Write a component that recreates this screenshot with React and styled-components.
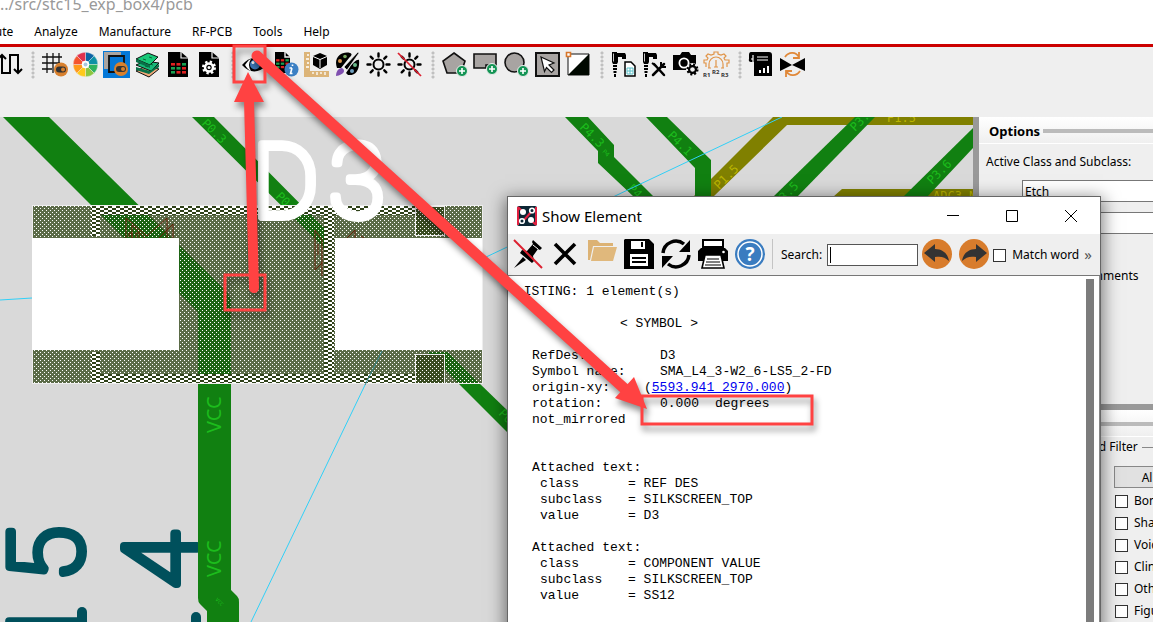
import React from "react";
import styled, { createGlobalStyle, css } from "styled-components";

const GlobalStyle = createGlobalStyle`
  *, *::before, *::after { box-sizing: border-box; }
  body {
    margin: 0;
    overflow: hidden;
    background: #efefef;
    color: #000;
    font-family: "Noto Sans", "Liberation Sans", sans-serif;
    font-size: 12px;
    line-height: 16px;
  }
  button, input, select { font: inherit; color: inherit; }
`;

const RED = "#ff4242";
const GREEN = "#118011";
const LABEL = "#1cbc1c";
const OLIVE = "#808000";
const GOLD = "#bab400";
const SILK = "#00505c";

/* ---------- application frame ---------- */

const Frame = styled.div`
  position: relative;
  display: flex;
  flex-direction: column;
  height: 100vh;
  overflow: hidden;
`;

const TitleBar = styled.header`
  height: 18px;
  overflow: hidden;
  background: #fff;
  color: #999;
  font-size: 16px;
  line-height: 9px;
  white-space: nowrap;
`;

const MenuBar = styled.nav`
  display: flex;
  align-items: center;
  gap: 21px;
  height: 29px;
  padding-top: 2px;
  background: #fff;
  border-bottom: 3px solid #cc0000;
`;

const MenuItem = styled.button`
  padding: 0;
  border: 0;
  background: none;
  &:first-child { margin-left: -20px; }
`;

const Toolbar = styled.div`
  display: flex;
  align-items: flex-start;
  flex: 0 0 70px;
  padding-top: 2px;
  background: #efefef;
`;

const ToolGroup = styled.div`
  display: flex;
  &:first-child { margin-left: -6px; }
`;

const Grip = styled.span`
  flex: 0 0 14px;
  height: 28px;
  margin-top: 2px;
  background: radial-gradient(circle at 2px 2px, #c0c0c0 1px, transparent 2px) 6px 0 / 4px 4px repeat-y;
`;

const ToolButton = styled.button`
  display: flex;
  align-items: center;
  justify-content: center;
  width: 31px;
  height: 31px;
  padding: 0;
  border: 0;
  background: none;
  svg { width: 27px; height: 27px; }
`;

const Workspace = styled.main`
  display: flex;
  flex: 1;
  min-height: 0;
`;

const Board = styled.section`
  flex: 1;
  min-width: 0;
  background: #d9d9d9;
  svg { display: block; width: 100%; height: 100%; }
`;

/* ---------- side panel ---------- */

const SidePanel = styled.aside`
  display: flex;
  flex-direction: column;
  flex: 0 0 180px;
  overflow: hidden;
  border-left: 6px solid #999;
  white-space: nowrap;
`;

const Pane = styled.section`
  display: flex;
  flex-direction: column;
  ${(p) => p.$divided && css`border-top: 6px solid #999;`}
  ${(p) => p.$height && css`height: ${p.$height}px;`}
`;

const PaneTitle = styled.h2`
  display: flex;
  align-items: center;
  gap: 3px;
  height: 27px;
  margin: 0;
  padding: 2px 0 0 10px;
  border-bottom: 1px solid #fff;
  background: linear-gradient(#fff, #efefef);
  font-size: 13px;
  line-height: 18px;
  &::after {
    content: "";
    flex: 1;
    height: 4px;
    background: #bbb;
  }
`;

const OptionsBody = styled.div`
  display: flex;
  flex-direction: column;
  padding: 10px 0 0 7px;
`;

const Combo = styled.select`
  appearance: none;
  width: 150px;
  height: 22px;
  margin: 10px 0 0 36px;
  padding: 2px 2px 0;
  border: 1px solid #777;
  border-radius: 0;
  background: #fff;
`;

const PaneNote = styled.p`
  margin: 34px 0 0 91px;
`;

const FilterSet = styled.fieldset`
  min-width: 300px;
  margin: 2px 0 0 75px;
  padding: 0 0 0 60px;
  border: 0;
  border-top: 1px solid #888;
  legend { margin-left: -36px; padding: 0 4px; }
`;

const FilterButton = styled.button`
  display: block;
  width: 90px;
  height: 22px;
  margin: 11px 0 2px;
  padding: 2px 0 0;
  border: 1px solid #888;
  background: #e1e1e1;
`;

const Check = styled.label`
  display: flex;
  align-items: center;
  gap: 6px;
  height: 22px;
  padding-left: 1px;
  white-space: nowrap;
  input {
    appearance: none;
    width: 13px;
    height: 13px;
    margin: 0;
    border: 1px solid #333;
    background: #fff;
  }
`;

/* ---------- dialog ---------- */

const Dialog = styled.section`
  position: absolute;
  top: 196px;
  left: 507px;
  bottom: -40px;
  display: flex;
  flex-direction: column;
  width: 594px;
  border: 1px solid #666;
  background: #efefef;
  box-shadow: 0 4px 16px 2px rgba(0, 0, 0, 0.5);
`;

const DialogTitle = styled.header`
  display: flex;
  align-items: center;
  gap: 5px;
  height: 37px;
  padding-left: 9px;
  background: #fff;
  h1 { flex: 1; margin: 0; font-size: 15px; font-weight: 400; }
`;

const WindowButtons = styled.div`
  display: flex;
`;

const WindowButton = styled.button`
  display: flex;
  align-items: center;
  justify-content: center;
  width: 59px;
  height: 36px;
  padding: 0;
  border: 0;
  background: none;
`;

const DialogTools = styled.div`
  display: flex;
  align-items: center;
  height: 42px;
  padding: 0 0 1px 1px;
  border-bottom: 1px solid #777;
`;

const DialogButton = styled.button`
  display: flex;
  align-items: center;
  justify-content: center;
  width: 37px;
  height: 40px;
  padding: 0;
  border: 0;
  background: none;
  svg { width: 30px; height: 30px; }
`;

const Divider = styled.span`
  width: 1px;
  height: 30px;
  margin: 0 8px 0 4px;
  background: #c4c4c4;
`;

const SearchLabel = styled.label`
  display: flex;
  align-items: center;
  gap: 5px;
  margin-top: 1px;
  input {
    width: 91px;
    height: 22px;
    padding: 0 2px;
    border: 1px solid #555;
    border-radius: 0;
    outline: 0;
    background: linear-gradient(#000, #000) 2px 2px / 1px 16px no-repeat #fff;
  }
`;

const MatchOption = styled.div`
  margin: 2px 5px 0 0;
`;

const MoreButton = styled.button`
  padding: 0;
  border: 0;
  background: none;
  color: #555;
  font-size: 15px;
`;

const Listing = styled.div`
  display: flex;
  justify-content: space-between;
  flex: 1;
  min-height: 0;
  padding: 3px 5px 0 8px;
  border-right: 1px solid #888;
  background: #fff;
  font-family: "Liberation Mono", "Courier New", monospace;
  font-size: 13px;
`;

const Lines = styled.div`
  padding-top: 5px;
`;

const Line = styled.div`
  display: flex;
  height: 16px;
  padding-left: ${(p) => (p.$indent || 0) * 8}px;
  white-space: pre;
  a { color: #0000ee; }
`;

const Key = styled.span`
  flex: 0 0 ${(p) => p.$cols * 8}px;
`;

const Units = styled.span`
  margin-left: 16px;
`;

const Scrollbar = styled.span`
  width: 8px;
  background: #7c7c7c;
`;

const Markup = styled.svg`
  position: absolute;
  top: 0;
  left: 0;
  pointer-events: none;
  filter: drop-shadow(2px 5px 3px rgba(0, 0, 0, 0.45));
`;

/* ---------- icons ---------- */

const Icon = ({ size = 27, children }) => (
  <svg width={size} height={size} viewBox={`0 0 ${size} ${size}`} fill="none" aria-hidden="true">
    {children}
  </svg>
);

const Plus = ({ x, y }) => (
  <g>
    <circle cx={x} cy={y} r="5.5" fill="#139454" stroke="#efefef" />
    <path d={`M${x - 3} ${y}h6M${x} ${y - 3}v6`} stroke="#fff" strokeWidth="1.6" />
  </g>
);

const Toggle = ({ x, y }) => (
  <g>
    <circle cx={x} cy={y} r="7" fill="#d8802e" />
    <rect x={x - 5} y={y - 3} width="10" height="6" rx="3" fill="#333" />
    <circle cx={x + 2} cy={y} r="2" fill="#d8802e" />
  </g>
);

const sheet = "M3 1H16L23 7V26H3Z";
const ReportCells = () => (
  <g>
    {[12, 16, 20].map((y, r) =>
      [6, 11.5, 17].map((x, c) => (
        <rect key={`${x}-${y}`} x={x} y={y} width="4" height="2.6" fill={(r + c) % 3 === 2 || (r === 1 && c === 0) ? "#18a050" : "#e02020"} />
      ))
    )}
  </g>
);

const hue = ["#0d64a5", "#0e91a6", "#2eb360", "#8cc63f", "#ffc91a", "#ff9a1a", "#f4542e", "#e0314d"];
const wheel = (i) => {
  const a = ((i * 45 - 90) * Math.PI) / 180;
  const b = (((i + 1) * 45 - 90) * Math.PI) / 180;
  const p = (r, t) => `${(13.5 + r * Math.cos(t)).toFixed(2)} ${(13.5 + r * Math.sin(t)).toFixed(2)}`;
  return `M${p(12.3, a)}A12.3 12.3 0 0 1 ${p(12.3, b)}L${p(3.5, b)}L${p(3.5, a)}Z`;
};

const Rays = () => (
  <g stroke="#000" strokeLinecap="round">
    <circle cx="13.5" cy="13.5" r="5" strokeWidth="2" />
    <path d="M13.5 2.5v3M13.5 21.5v3M2.5 13.5h3M21.5 13.5h3M5.7 5.7l2 2M19.3 19.3l2 2M5.7 21.3l2-2M19.3 7.7l2-2" strokeWidth="2.4" />
  </g>
);

const Drill = () => (
  <g fill="#000">
    <path d="M2 1h5v1h8l1 2v4h-4V6H8v5l-1 2H3l-1-2Z" />
    <path d="M3 14h4v2H3zM3 17h4v2H3zM3.5 20h3v2h-3zM4 23h2v3H4z" />
    <path d="M3.5 2.5v8" stroke="#fff" strokeWidth=".8" />
  </g>
);

const Gear = ({ x, y, r }) => (
  <g>
    <circle cx={x} cy={y} r={r} strokeWidth={r * 0.8} strokeDasharray={`${(r * Math.PI) / 8} ${(r * Math.PI) / 8}`} />
    <circle cx={x} cy={y} r={r * 0.8} strokeWidth={r * 0.5} />
  </g>
);

const icons = {
  route: (
    <>
      <path d="M6 5v17h8V4h8v17" stroke="#000" strokeWidth="2" />
      <path d="m2 8 4-4 4 4M18 18l4 4 4-4" stroke="#000" strokeWidth="2" />
    </>
  ),
  grid: (
    <>
      <path d="M6 2v20M12 2v20M18 2v12M1 6h20M1 12h18M1 18h10" stroke="#111" strokeWidth="1.3" />
      <Toggle x={20} y={18.5} />
    </>
  ),
  color: (
    <>
      {hue.map((c, i) => <path key={c} d={wheel(i)} fill={c} stroke="#efefef" strokeWidth=".4" />)}
      <circle cx="13.5" cy="13.5" r="3.7" fill="#fff" />
      <circle cx="13.5" cy="13.5" r="2" fill="#a8c8e0" />
    </>
  ),
  shadow: (
    <>
      <path d="M0 0h27v27H0z" fill="#0478d8" />
      <path d="M1 1h17v17H1z" fill="#aaa5a2" />
      <path d="M6 5h15v16H6z" fill="#0478d8" stroke="#111" strokeWidth="1.8" />
      <Toggle x={18} y={18} />
    </>
  ),
  layers: (
    <>
      <path d="M2 20 12 15l13 3-10 8Z" fill="#f0a878" stroke="#111" />
      <path d="M2 14 11 10l14 2-8 8Z" fill="#18b878" stroke="#111" />
      <path d="M2 8 14 2l10 4-8 8Z" fill="#18c878" stroke="#111" />
      <path d="M2 8 16 14v3L2 11ZM2 16l14 4 9-7v3l-10 7-13-4Z" fill="#087048" />
      <path d="m9 8 3 1m3-3 3 1m-7 8 3 1m2-3 3 1" stroke="#086838" />
    </>
  ),
  report: (
    <>
      <path d={sheet} fill="#000" />
      <path d="M16 1v6h7" stroke="#efefef" strokeWidth="1.2" />
      <ReportCells />
    </>
  ),
  setup: (
    <>
      <path d={sheet} fill="#000" />
      <path d="M16 1v6h7" stroke="#efefef" strokeWidth="1.2" />
      <g stroke="#fff"><Gear x={13} y={16.5} r={5} /></g>
      <circle cx="13" cy="16.5" r="1.5" fill="#fff" />
    </>
  ),
  eye: (
    <>
      <path d="M1 14Q13 0 26 14Q13 27 1 14Z" fill="#000" />
      <path d="M4 14Q8 8 10 8Q6 14 10 20Q7 19 4 14Z" fill="#fff" />
      <circle cx="14" cy="13.5" r="5" fill="#3c78b8" />
      <circle cx="12" cy="11.5" r="1.5" fill="#fff" />
    </>
  ),
  info: (
    <>
      <path d="M3 1h10l5 5v16H3Z" fill="#000" />
      <path d="M13 1v5h5" stroke="#efefef" strokeWidth="1.4" />
      <g transform="translate(-1 -2) scale(.85)"><ReportCells /></g>
      <circle cx="19.5" cy="18.5" r="7" fill="#3c80c4" />
      <path d="m20 17-1.500 5.500h2M17.500 17H20M20.500 13.500v1.500" stroke="#fff" strokeWidth="1.6" />
    </>
  ),
  measure: (
    <>
      <path d="M1 1h6v19h19v6H1Z" fill="#dcb478" />
      <path d="M4 4h2M3 8h3M4 12h2M3 16h3M10 21v2M14 21v3M18 21v2M22 21v3" stroke="#fff" strokeWidth="1.3" />
      <path d="m10 5 7-3 7 3v9l-7 4-7-4Z" fill="#000" />
      <path d="m10 5.500 7 3 7-3M17 8.500V17" stroke="#fff" />
    </>
  ),
  palette: (
    <>
      <path d="M3 17C-1 6 8 0 16 2c3 1 1 3-1 5L7 17Zm11 7c8 1 12-6 11-15-2-1-6 3-9 7l-4 6Z" fill="#000" />
      <path d="M24 1 10 16l3 3L25 2Z" fill="#000" stroke="#fff" strokeWidth=".6" />
      <path d="M2 25c0-4 2-8 6-8 4 2 2 7-6 8Z" fill="#8050b0" />
      <circle cx="6" cy="10" r="2" fill="#d89850" />
      <circle cx="11" cy="5.5" r="1.8" fill="#78a860" />
      <circle cx="21" cy="14" r="2" fill="#68b888" />
      <circle cx="18" cy="20" r="2" fill="#70a0c0" />
    </>
  ),
  bright: <Rays />,
  dim: (
    <>
      <Rays />
      <path d="m2 2 23 23" stroke="#dc2030" strokeWidth="1.7" />
    </>
  ),
  polygon: (
    <>
      <path d="m13 2 11 8-4 12H6L2 10Z" fill="#a8a4a2" stroke="#111" strokeWidth="1.6" />
      <Plus x={21} y={20} />
    </>
  ),
  rect: (
    <>
      <path d="M2 3h22v11H14v3H2Z" fill="#a8a4a2" stroke="#111" strokeWidth="1.6" />
      <Plus x={20} y={18} />
    </>
  ),
  circle: (
    <>
      <circle cx="11.5" cy="11.5" r="9.5" fill="#a8a4a2" stroke="#111" strokeWidth="1.6" />
      <Plus x={20} y={20} />
    </>
  ),
  select: (
    <>
      <path d="M2 2h23v23H2z" fill="#a8a4a2" stroke="#111" strokeWidth="2" />
      <path d="m7 6 13 6-5 2 5 5-2.500 2.500-5-5-2 4Z" fill="#fff" stroke="#111" strokeWidth="1.2" />
    </>
  ),
  invert: (
    <>
      <path d="M3 3h21v21H3z" fill="#fff" stroke="#111" />
      <path d="M24 3v21H3Z" fill="#000800" />
      <path d="M1.500 1.500h4v4h-4z" fill="#fff" stroke="#d8762a" strokeWidth="1.6" />
    </>
  ),
  drillReport: (
    <>
      <Drill />
      <path d="M15 11h6l4 4v10H15Z" fill="#fff" stroke="#000" strokeWidth="1.5" />
      <path d="M17 17h6v6h-6zM20 17v6M17 20h6" stroke="#58c0c8" />
    </>
  ),
  drillTool: (
    <>
      <Drill />
      <path d="m13 13 10 11M12 24 23 13" stroke="#000" strokeWidth="2.5" strokeLinecap="round" />
      <path d="M20 11v5h5M11 12l4 3" stroke="#000" strokeWidth="2" />
    </>
  ),
  camera: (
    <>
      <path d="M1 4h7l2-3h7l2 3h5v13l-4-1-3 3H1Z" fill="#000" />
      <circle cx="12" cy="12" r="4.6" stroke="#fff" strokeWidth="1.8" />
      <circle cx="20.5" cy="18.5" r="6.5" fill="#efefef" />
      <g stroke="#000"><Gear x={20.5} y={18.5} r={4.3} /></g>
    </>
  ),
  dials: (
    <>
      <path d="M3 16V12H1V9h3l1-2-2-2 2-2 3 1 3-1V1h4v2l3 1 3-1 2 2-2 2 1 2h4v3h-2v4" stroke="#e09448" strokeWidth="1.2" />
      <path d="M6 17V13a7 7 0 0 1 14 0v4M13 9v7M11 16h4M5 17h3M18 17h3" stroke="#e09448" strokeWidth="1.2" />
      <text x="0" y="26" fontSize="6" fontWeight="700" fill="#333">R1</text>
      <text x="9" y="23" fontSize="6" fontWeight="700" fill="#333">R2</text>
      <text x="18" y="26" fontSize="6" fontWeight="700" fill="#333">R3</text>
    </>
  ),
  script: (
    <>
      <path d="M3 1h18q3 0 3 3v21H6V11H3Q0 11 1 8V4q0-3 2-3Z" fill="#000" />
      <path d="M5 4v7M3 8h2M9 6h11M9 9h11" stroke="#fff" strokeWidth="1.2" />
      <path d="M12 22v-3M16 22v-5M20 22v-7" stroke="#fff" strokeWidth="2" />
    </>
  ),
  swap: (
    <>
      <path d="M1 7l12 7L1 20ZM26 7 13 14l13 6Z" fill="#000" />
      <path d="M6 6c4-6 11-5 14 0M20 1v6h-6M21 20c-4 6-11 5-14 0M7 26v-6h6" stroke="#e08838" strokeWidth="1.8" />
    </>
  ),
};

const toolGroups = [
  [["route", "Route"]],
  [["grid", "Grid"], ["color", "Color"], ["shadow", "Shadow mode"], ["layers", "Cross section"], ["report", "Constraints"], ["setup", "Setup"]],
  [["eye", "Visibility"], ["info", "Show element"], ["measure", "Measure"], ["palette", "Assign color"], ["bright", "Highlight"], ["dim", "Dehighlight"]],
  [["polygon", "Add shape"], ["rect", "Add rectangle"], ["circle", "Add circle"], ["select", "Select shape"], ["invert", "Void"]],
  [["drillReport", "Drill legend"], ["drillTool", "Drill customization"], ["camera", "Artwork"], ["dials", "Rename"]],
  [["script", "Reports"], ["swap", "Swap"]],
];

const dialogIcons = [
  ["Pin", <>
    <path d="m20 1 9 8-2 2-2-1-5 7 1 5-2 2L7 14l2-3 5 1 6-7-1-2Z" fill="#000" />
    <path d="m10 18-9 11 12-8Z" fill="#000" />
    <path d="m20 6 5 4" stroke="#fff" />
    <path d="m1 1 28 28" stroke="#dc2030" strokeWidth="2" />
  </>],
  ["Close", <path d="m5 5 20 20M25 5 5 25" stroke="#000" strokeWidth="3.6" />],
  ["Open", <>
    <path d="M1 1h9l3 3h13v3H6L3 21H1Z" fill="#dcb274" />
    <path d="M7 8h23l-4 14H4Z" fill="#e0b87c" />
  </>],
  ["Save", <>
    <path d="M1 0h24l5 5v25H0V1Z" fill="#000" />
    <path d="M7 2h14v8H7zM6 15h18v12H6z" fill="#fff" />
    <path d="M17 3h2v5h-2z" fill="#000" />
    <path d="M8 19h14M8 23h14" stroke="#000" strokeWidth="2" />
  </>],
  ["Refresh", <>
    <path d="M2 14A13 13 0 0 1 23 5M28 16A13 13 0 0 1 7 25" stroke="#000" strokeWidth="3.5" />
    <path d="M29 1v12H18ZM1 29V17h11Z" fill="#000" />
  </>],
  ["Print", <>
    <path d="M5 1h20v7H5z" fill="#fff" stroke="#000" strokeWidth="2" />
    <path d="M3 9h24l3 3v10H0V12Z" fill="#000" />
    <path d="M7 16h16l3 13H4Z" fill="#fff" stroke="#000" strokeWidth="1.6" />
    <path d="M9 20h12M8 23h14M7 26h16" stroke="#000" strokeWidth="1.2" />
    <circle cx="25.5" cy="13" r="1.3" fill="#fff" />
  </>],
  ["Help", <>
    <circle cx="15" cy="15" r="15" fill="#3a7cc0" />
    <circle cx="15" cy="15" r="12" stroke="#fff" strokeWidth="1.5" />
    <text x="15" y="22" textAnchor="middle" fontSize="19" fontWeight="700" fill="#fff">?</text>
  </>],
];

const ArrowDisc = ({ flip }) => (
  <Icon size={30}>
    <circle cx="15" cy="15" r="15" fill="#d87c2c" />
    <path
      d="M2 14 13 5v5c8 0 13 5 14 12-4-4-8-5-14-4v5Z"
      fill="#333"
      transform={flip ? "matrix(-1 0 0 1 30 0)" : undefined}
    />
  </Icon>
);

/* ---------- board drawing ---------- */

const Net = ({ x, y, turn = 0, color = LABEL, size = 12, children }) => (
  <text
    transform={`translate(${x} ${y}) rotate(${turn})`}
    fill={color}
    fontSize={size}
    fontFamily='"DejaVu Sans Mono", monospace'
  >
    {children}
  </text>
);

const Silk = ({ x, y, turn = 0, color = SILK, children }) => (
  <text
    transform={`translate(${x} ${y}) rotate(${turn})`}
    fill={color}
    stroke={color}
    strokeWidth="8"
    strokeLinejoin="round"
    fontSize="102"
    fontWeight="100"
    fontFamily="Roboto, sans-serif"
  >
    {children}
  </text>
);

const BoardDrawing = () => (
  <svg aria-label="Board layout">
    <defs>
      <pattern id="dots" width="4" height="4" patternUnits="userSpaceOnUse" shapeRendering="crispEdges">
        <path d="M0 0h1v1H0zM2 2h1v1H2z" fill="#fff" />
      </pattern>
      <pattern id="weave" width="8" height="4" patternUnits="userSpaceOnUse" shapeRendering="crispEdges">
        <path d="M0 0h8v4H0z" fill="#fff" />
        <path d="M0 0h4v2H0zM4 2h4v2H4z" fill="#30421a" />
      </pattern>
      <clipPath id="beforeTrace"><path d="M100 500h98v110h-98z" /></clipPath>
    </defs>
    <g transform="translate(0 -117)">
      <g fill={OLIVE}>
        <path d="M773 117H973V125H787L713 197H693Z" />
        <path d="M833 197 842 189H973V197Z" />
      </g>
      <g fill={GREEN}>
        <path d="M3 117H49L227 292 231 300V590L237 596Q239 598 239 602V622H207V611L200 604Q198 602 198 598V312Z" />
        <path d="M192 117H214L334 238V262L320 244Z" />
        <path d="M427 352H447L508 411V433Z" />
        <path d="M565 117H588L614 145V157L654 197H634L598 163V151Z" />
        <path d="M646 117H667L711 160V197H695V168Z" />
        <path d="M855 117H875L797 197H773Z" />
        <path d="M973 128V148L927 197H903Z" />
      </g>
      <Net x={201} y={124} turn={45}>P0.3</Net>
      <Net x={275} y={197} turn={45}>P0</Net>
      <Net x={579} y={128} turn={45}>P4.3</Net>
      <Net x={627} y={189} turn={45}>P4.1</Net>
      <Net x={667} y={136} turn={45}>P4.1</Net>
      <Net x={602} y={152} turn={45} size={6}>P4</Net>
      <Net x={719} y={190} turn={-45} color={GOLD}>P1.5</Net>
      <Net x={855} y={132} turn={-45}>P3.5</Net>
      <Net x={779} y={207} turn={-45}>P3.5</Net>
      <Net x={932} y={185} turn={-45}>P3.6</Net>
      <Net x={887} y={122} color={GOLD}>P1.5</Net>
      <Net x={933} y={200} color={GOLD}>ADC3_N</Net>
      <Net x={498} y={414} turn={45}>P0</Net>
      <g fontSize="20">
        <text transform="translate(221 433) rotate(-90)" fill={LABEL}>VCC</text>
        <text transform="translate(221 577) rotate(-90)" fill={LABEL}>VCC</text>
      </g>
      <Net x={215} y={600} turn={45} size={5}>VCC</Net>

      <g shapeRendering="crispEdges">
        <path d="M32 205H482V383H32Z" fill="#2a400f" fillOpacity=".72" />
        <path d="M101 215H147L227 292 231 300V375H198V312ZM290 215H311L324 228V246ZM427 352H447L479 383H458Z" fill="#1d6414" />
        <path d="M32 205H482V383H32Z" fill="url(#dots)" stroke="#eee" />
        <path d="M91 206H415V215H91ZM91 374H415V383H91ZM91 206h9v30h-9zM91 352h9v31h-9zM324 206h10v177h-10z" fill="url(#weave)" />
        <path d="M415 206h29v29h-29zM415 354h29v29h-29z" fill="#3a4c22" />
        <path d="M415 206h29v29h-29zM415 354h29v29h-29z" fill="url(#dots)" stroke="#eee" />
      </g>
      <path d="M126 238V218L147 236 167 218V238M132 238V225L145 238M159 238 173 224V238M129 237v-4h3v5M136 238v-5h3v5M315 230v40l7-7V240l-7-10M318 255V244M322 262v14M347 238l8-8v8M361 236l3 2" stroke="#68240c" fill="none" />
      <path d="M32 238H179V350H32ZM335 238H482V350H335Z" fill="#fff" />
      <path d="M0 300 32 298M484 258 782 117M251 622 365 385" stroke="#30d0f8" />
      <path d="M365 385 382 351" stroke="#308890" />
      <Silk x={252} y={217} color="#fff">D</Silk>
      <Silk x={329} y={217} color="#fff">3</Silk>
      <Silk x={82} y={582} turn={-90}>5</Silk>
      <Silk x={82} y={654} turn={-90}>1</Silk>
      <path d="M82 612v12" stroke={SILK} strokeWidth="10" strokeLinecap="round" />
      <g clipPath="url(#beforeTrace)">
        <Silk x={197} y={588} turn={-90}>4</Silk>
      </g>
      <path d="M196 617v12" stroke={SILK} strokeWidth="10" strokeLinecap="round" />
    </g>
  </svg>
);

const fields = (rows) =>
  rows.map(([k, v]) => (
    <Line key={k} $indent={3}>
      <Key $cols={11}>{k}</Key>
      <span>= {v}</span>
    </Line>
  ));

export default function App() {
  return (
    <Frame>
      <GlobalStyle />
      <TitleBar>../src/stc15_exp_box4/pcb</TitleBar>
      <MenuBar>
        {["Route", "Analyze", "Manufacture", "RF-PCB", "Tools", "Help"].map((m) => (
          <MenuItem key={m}>{m}</MenuItem>
        ))}
      </MenuBar>
      <Toolbar>
        {toolGroups.map((group, i) => (
          <React.Fragment key={i}>
            {i > 0 && <Grip />}
            <ToolGroup>
              {group.map(([name, label]) => (
                <ToolButton key={name} aria-label={label}>
                  <Icon>{icons[name]}</Icon>
                </ToolButton>
              ))}
            </ToolGroup>
          </React.Fragment>
        ))}
      </Toolbar>

      <Workspace>
        <Board>
          <BoardDrawing />
        </Board>
        <SidePanel>
          <Pane $height={287}>
            <PaneTitle>Options</PaneTitle>
            <OptionsBody>
              <label htmlFor="etch-class">Active Class and Subclass:</label>
              <Combo id="etch-class"><option>Etch</option></Combo>
              <Combo aria-label="Subclass"><option></option></Combo>
              <PaneNote>Comments</PaneNote>
            </OptionsBody>
          </Pane>
          <Pane $divided>
            <PaneTitle aria-label="Find" />
            <FilterSet>
              <legend>Find Filter</legend>
              <FilterButton>All Off</FilterButton>
              {["Bond wires", "Shapes", "Voids/Cavities", "Cline segs", "Other segs", "Figures"].map((n) => (
                <Check key={n}>
                  <input type="checkbox" />
                  {n}
                </Check>
              ))}
            </FilterSet>
          </Pane>
        </SidePanel>
      </Workspace>

      <Dialog role="dialog" aria-label="Show Element">
        <DialogTitle>
          <Icon size={20}>
            <rect width="20" height="20" rx="2" fill="#0c2634" />
            <path d="M1 1v18M19 1v18M1 1l4 4M15 5l-8 9M15 15l4 4" stroke="#e02040" strokeWidth="2" />
            <circle cx="6" cy="6" r="3" fill="#fff" />
            <circle cx="14" cy="14" r="3" fill="#fff" />
            <circle cx="15" cy="4.5" r="2.3" stroke="#fff" strokeWidth="1.6" fill="#0c2634" />
            <circle cx="5" cy="15" r="2.3" stroke="#fff" strokeWidth="1.6" fill="#0c2634" />
          </Icon>
          <h1>Show Element</h1>
          <WindowButtons>
            <WindowButton aria-label="Minimize"><Icon size={12}><path d="M0 5.500h12" stroke="#000" /></Icon></WindowButton>
            <WindowButton aria-label="Maximize"><Icon size={12}><path d="M.5.5h11v11H.5z" stroke="#000" /></Icon></WindowButton>
            <WindowButton aria-label="Close window"><Icon size={12}><path d="m0 0 12 12M12 0 0 12" stroke="#000" /></Icon></WindowButton>
          </WindowButtons>
        </DialogTitle>
        <DialogTools>
          {dialogIcons.map(([label, art]) => (
            <DialogButton key={label} aria-label={label}><Icon size={30}>{art}</Icon></DialogButton>
          ))}
          <Divider />
          <SearchLabel>Search:<input type="text" /></SearchLabel>
          <DialogButton aria-label="Previous"><ArrowDisc /></DialogButton>
          <DialogButton aria-label="Next"><ArrowDisc flip /></DialogButton>
          <MatchOption>
            <Check><input type="checkbox" />Match word</Check>
          </MatchOption>
          <MoreButton aria-label="More">»</MoreButton>
        </DialogTools>
        <Listing>
          <Lines>
            <Line>LISTING: 1 element(s)</Line>
            <Line />
            <Line $indent={13}>{"< SYMBOL >"}</Line>
            <Line />
            <Line $indent={2}><Key $cols={16}>RefDes:</Key>D3</Line>
            <Line $indent={2}><Key $cols={16}>Symbol name:</Key>SMA_L4_3-W2_6-LS5_2-FD</Line>
            <Line $indent={2}><Key $cols={14}>origin-xy:</Key>(<a href="#origin">5593.941 2970.000</a>)</Line>
            <Line $indent={2}><Key $cols={16}>rotation:</Key>0.000<Units>degrees</Units></Line>
            <Line $indent={2}>not_mirrored</Line>
            <Line />
            <Line />
            <Line $indent={2}>Attached text:</Line>
            {fields([["class", "REF DES"], ["subclass", "SILKSCREEN_TOP"], ["value", "D3"]])}
            <Line />
            <Line $indent={2}>Attached text:</Line>
            {fields([["class", "COMPONENT VALUE"], ["subclass", "SILKSCREEN_TOP"], ["value", "SS12"]])}
          </Lines>
          <Scrollbar />
        </Listing>
      </Dialog>

      <Markup width="860" height="460" fill="none" aria-hidden="true">
        <g stroke={RED} strokeWidth="3">
          <path d="M234 46H265V82H234ZM225 275H265V310H225ZM642 396H812V424H642Z" />
        </g>
        <g stroke={RED} strokeLinecap="round">
          <path d="M254 288 249 100" strokeWidth="10" />
          <path d="M257 56 626 390" strokeWidth="11" />
        </g>
        <path d="M248 72 264 102H234ZM647 409 634 377 615 398Z" fill={RED} />
      </Markup>
    </Frame>
  );
}
